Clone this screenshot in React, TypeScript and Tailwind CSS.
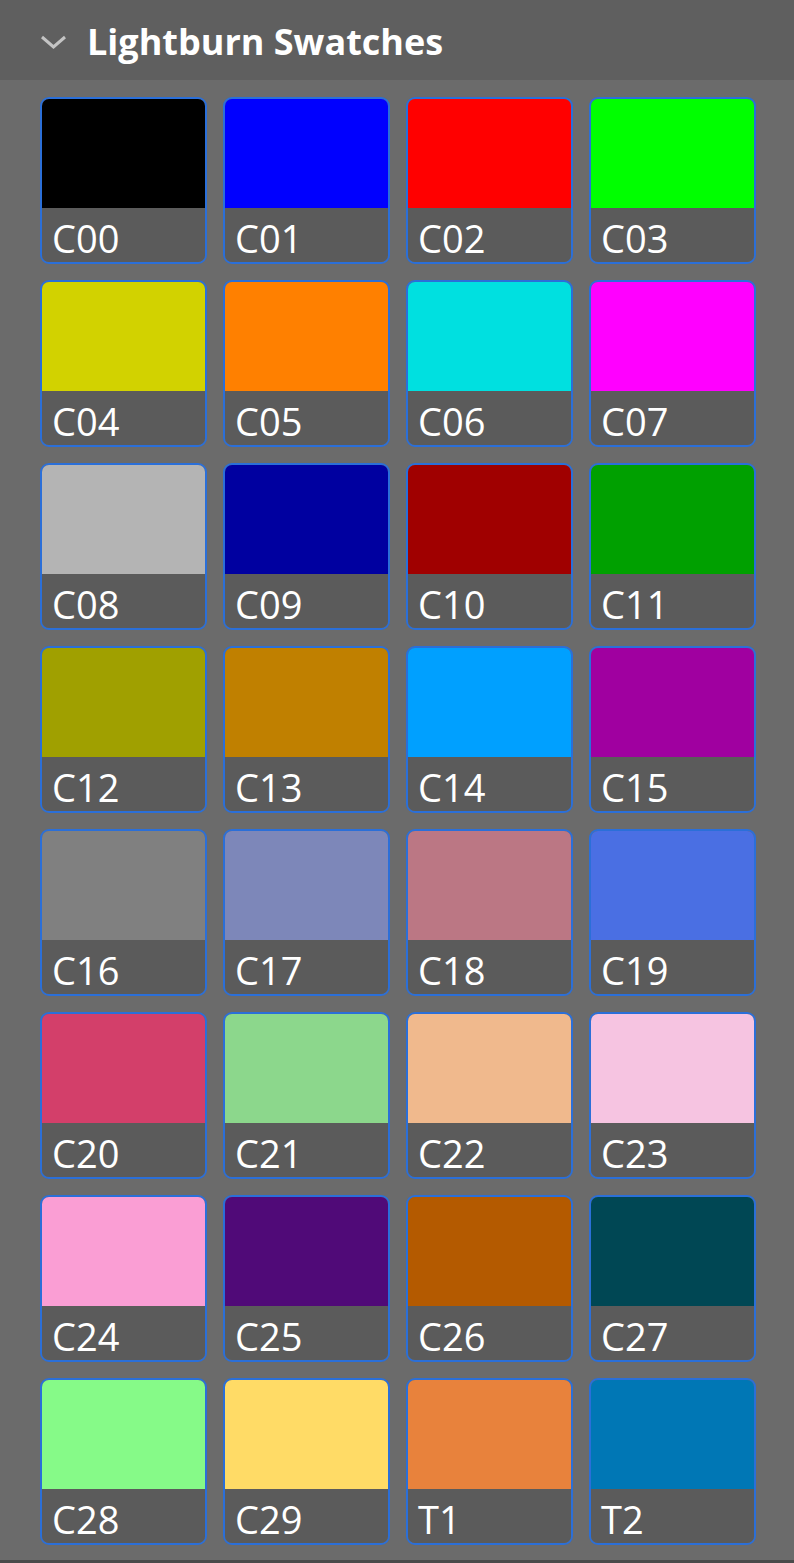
const swatches: [string, string][] = [
  ["C00", "#000000"],
  ["C01", "#0000ff"],
  ["C02", "#ff0000"],
  ["C03", "#00ff00"],
  ["C04", "#d2d200"],
  ["C05", "#ff8000"],
  ["C06", "#00e0e0"],
  ["C07", "#ff00ff"],
  ["C08", "#b4b4b4"],
  ["C09", "#0000a0"],
  ["C10", "#a00000"],
  ["C11", "#00a000"],
  ["C12", "#a0a000"],
  ["C13", "#c08000"],
  ["C14", "#00a0ff"],
  ["C15", "#a000a0"],
  ["C16", "#808080"],
  ["C17", "#7d87b9"],
  ["C18", "#bb7784"],
  ["C19", "#4a6fe3"],
  ["C20", "#d33f6a"],
  ["C21", "#8cd78c"],
  ["C22", "#f0b98d"],
  ["C23", "#f6c4e1"],
  ["C24", "#fa9ed4"],
  ["C25", "#500a78"],
  ["C26", "#b45a00"],
  ["C27", "#004754"],
  ["C28", "#86fa88"],
  ["C29", "#ffdb66"],
  ["T1", "#e8823c"],
  ["T2", "#0077b5"],
];

export default function App() {
  return (
    <main
      className="min-h-[1563px] bg-[#6b6b6b] border-b-[3px] border-[#4a4a4a]"
      style={{ fontFamily: '"Open Sans", "Liberation Sans", sans-serif' }}
    >
      {/* Panel header */}
      <div className="h-[80px] bg-[#5f5f5f] flex items-center pl-[40px] pt-[3px] gap-[20px]">
        <svg width="27" height="16" viewBox="0 0 27 16" fill="none">
          <path d="M2 3 L13.5 13 L25 3" stroke="#c4c4c4" strokeWidth="3" />
        </svg>
        <span className="text-white font-bold text-[36px] leading-[44px]">
          Lightburn Swatches
        </span>
      </div>

      {/* Swatch grid */}
      <div className="grid grid-cols-4 gap-[16px] pl-[40px] pr-[38px] pt-[17px]">
        {swatches.map(([name, color]) => (
          <div
            key={name}
            className="h-[167px] rounded-[9px] border-2 border-[#2b6fd8] overflow-hidden flex flex-col"
          >
            <div className="h-[109px]" style={{ backgroundColor: color }} />
            <div className="flex-1 bg-[#5b5b5b] pl-[10px] pt-[9px]">
              <span className="block text-white text-[38px] leading-[42px]">{name}</span>
            </div>
          </div>
        ))}
      </div>
    </main>
  );
}
